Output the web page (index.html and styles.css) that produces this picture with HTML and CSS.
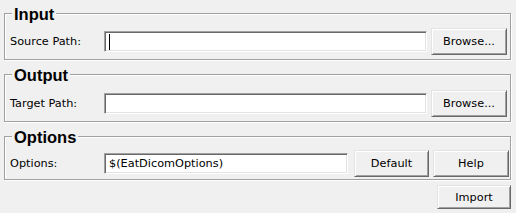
FILE: index.html
```html
<!DOCTYPE html>
<html>
<head>
<meta charset="utf-8">
<link rel="stylesheet" href="styles.css">
</head>
<body>
<div class="dialog">
  <section class="group group-input">
    <h2 class="group-title">Input</h2>
    <div class="row">
      <label class="label">Source Path:</label>
      <div class="field field-path"><span class="caret"></span></div>
      <button class="btn btn-browse">Browse...</button>
    </div>
  </section>
  <section class="group group-output">
    <h2 class="group-title">Output</h2>
    <div class="row">
      <label class="label">Target Path:</label>
      <div class="field field-path"></div>
      <button class="btn btn-browse">Browse...</button>
    </div>
  </section>
  <section class="group group-options">
    <h2 class="group-title">Options</h2>
    <div class="row">
      <label class="label">Options:</label>
      <div class="field field-options">$(EatDicomOptions)</div>
      <button class="btn btn-default">Default</button>
      <button class="btn btn-help">Help</button>
    </div>
  </section>
  <div class="actions">
    <button class="btn btn-import">Import</button>
  </div>
</div>
</body>
</html>
```

FILE: styles.css
```css
html, body {
  margin: 0;
  padding: 0;
  background: #f0f0f0;
}
body {
  width: 516px;
  height: 213px;
  overflow: hidden;
  font-family: "DejaVu Sans", "Liberation Sans", sans-serif;
  font-size: 11.3px;
  color: #000;
}
.dialog {
  padding-top: 13px;
  display: flex;
  flex-direction: column;
}
.group {
  margin: 0 5px 0 4px;
  border: 1px solid #a0a0a0;
  box-shadow: inset 1px 1px #fff, 1px 1px #fff;
  padding: 0 0 4px 0;
}
.group-output {
  margin-top: 14px;
}
.group-options {
  margin-top: 14px;
  padding-bottom: 2px;
}
.group-title {
  align-self: flex-start;
  display: table;
  margin: -10px 0 0 7px;
  padding: 0 2px;
  height: 20px;
  background: #f0f0f0;
  font-family: "Liberation Sans", Arial, sans-serif;
  font-weight: bold;
  font-size: 16.5px;
  line-height: 20px;
}
.row {
  display: flex;
  align-items: center;
  height: 27px;
  margin-top: 4px;
  padding-left: 5px;
}
.group-output .row {
  margin-top: 5px;
}
.group-options .row {
  margin-top: 3px;
}
.label {
  width: 94px;
  flex: none;
}
.field {
  box-sizing: border-box;
  height: 21px;
  background: #fff;
  border: 1px solid;
  border-color: #a0a0a0 #fff #fff #a0a0a0;
  box-shadow: inset 1px 1px #696969, inset -1px -1px #e3e3e3;
  display: flex;
  align-items: center;
  padding-left: 4px;
  white-space: nowrap;
  flex: none;
}
.field-path {
  width: 323px;
}
.field-options {
  width: 244px;
}
.caret {
  display: block;
  width: 1px;
  height: 16px;
  background: #000;
  margin-left: 0px;
}
.btn {
  box-sizing: border-box;
  height: 27px;
  flex: none;
  font: inherit;
  color: #000;
  background: #f0f0f0;
  border: 1px solid;
  border-color: #e3e3e3 #696969 #696969 #e3e3e3;
  box-shadow: inset 1px 1px #fff, inset -1px -1px #a0a0a0;
  padding: 0;
  text-align: center;
}
.btn-browse {
  width: 76px;
  margin-left: 4px;
}
.btn-default {
  width: 75px;
  margin-left: 6px;
}
.btn-help {
  width: 76px;
  margin-left: 4px;
}
.actions {
  display: flex;
  justify-content: flex-end;
  margin: 5px 5px 0 0;
}
.btn-import {
  width: 74px;
  height: 24px;
}
```
